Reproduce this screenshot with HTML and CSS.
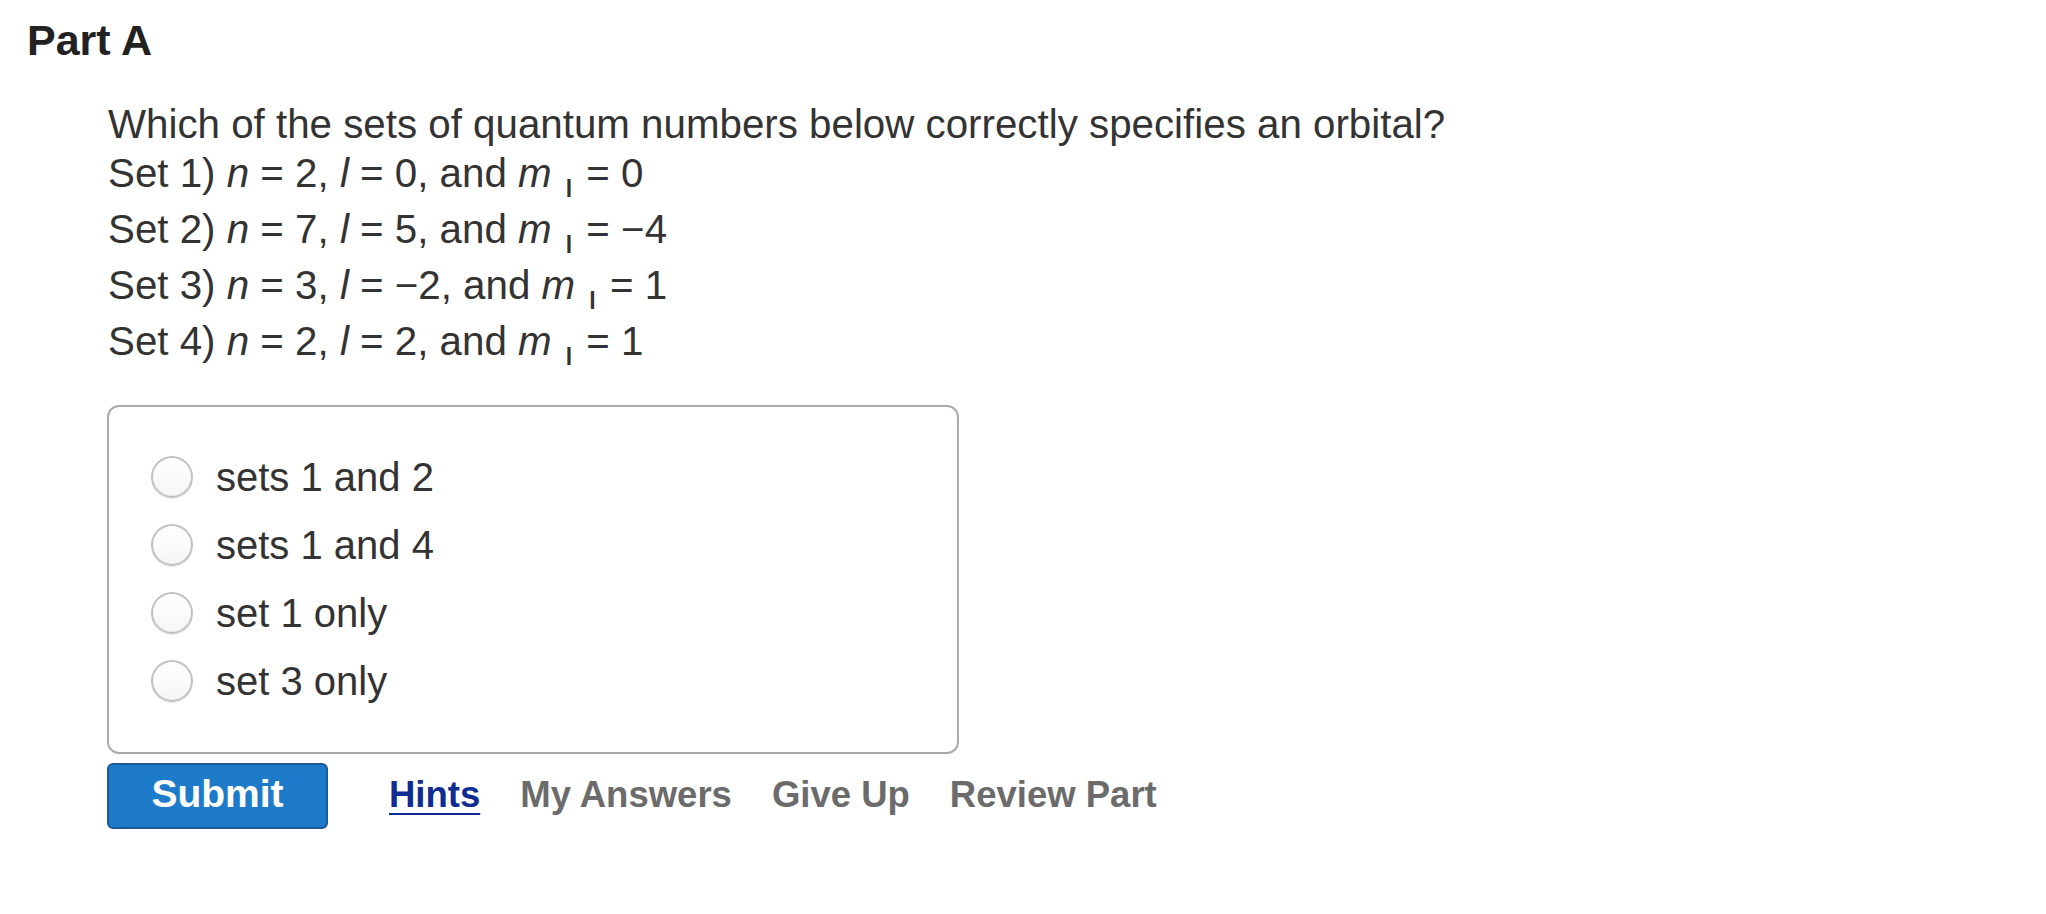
FILE: index.html
```html
<!DOCTYPE html>
<html lang="en">
<head>
<meta charset="utf-8">
<title>Part A</title>
<link rel="stylesheet" href="styles.css">
</head>
<body>
<div class="page">
  <h2 class="part-title">Part A</h2>
  <div class="part-body">
    <div class="question">
      <div class="q-line">Which of the sets of quantum numbers below correctly specifies an orbital?</div>
      <div class="set-line">Set 1) <i>n</i> = 2, <i>l</i> = 0, and <i>m</i> <span class="sub">l</span> = 0</div>
      <div class="set-line">Set 2) <i>n</i> = 7, <i>l</i> = 5, and <i>m</i> <span class="sub">l</span> = −4</div>
      <div class="set-line">Set 3) <i>n</i> = 3, <i>l</i> = −2, and <i>m</i> <span class="sub">l</span> = 1</div>
      <div class="set-line">Set 4) <i>n</i> = 2, <i>l</i> = 2, and <i>m</i> <span class="sub">l</span> = 1</div>
    </div>
    <div class="choices">
      <label class="choice"><span class="radio"></span><span class="choice-text">sets 1 and 2</span></label>
      <label class="choice"><span class="radio"></span><span class="choice-text">sets 1 and 4</span></label>
      <label class="choice"><span class="radio"></span><span class="choice-text">set 1 only</span></label>
      <label class="choice"><span class="radio"></span><span class="choice-text">set 3 only</span></label>
    </div>
    <div class="actions">
      <button class="submit" type="button">Submit</button>
      <a class="link link-hints" href="#">Hints</a>
      <a class="link" href="#">My Answers</a>
      <a class="link" href="#">Give Up</a>
      <a class="link" href="#">Review Part</a>
    </div>
  </div>
</div>
</body>
</html>
```

FILE: styles.css
```css
html, body {
  margin: 0;
  padding: 0;
  background: #ffffff;
}

body {
  font-family: "Liberation Sans", Arial, Helvetica, sans-serif;
  color: #333333;
}

.page {
  padding: 16px 0 0 27px;
}

.part-title {
  margin: 0;
  font-size: 43px;
  line-height: 48px;
  font-weight: bold;
  color: #222222;
}

.part-body {
  padding-left: 80px;
}

.question {
  margin-top: 36px;
  font-size: 40.3px;
  color: #333333;
}

.q-line {
  line-height: 49px;
  padding-left: 1px;
}

.set-line {
  line-height: 49px;
  padding-bottom: 7px;
  padding-left: 1px;
}

.question i {
  font-style: italic;
}

.sub {
  font-size: 23px;
  font-weight: bold;
  line-height: 0;
  vertical-align: -10px;
  font-style: normal;
  color: #333333;
  margin: 0 3px;
}

.choices {
  box-sizing: border-box;
  width: 852px;
  margin-top: 32px;
  border: 2px solid #ababab;
  border-radius: 12px;
  padding: 36px 0 37px 42px;
}

.choice {
  display: flex;
  align-items: center;
  height: 68px;
  font-size: 40px;
  color: #333333;
}

.radio {
  box-sizing: border-box;
  width: 42px;
  height: 42px;
  border-radius: 50%;
  border: 2px solid #c2c2c2;
  background: linear-gradient(#ffffff, #f6f6f6);
  box-shadow: inset 0 -1px 1px rgba(0, 0, 0, 0.06), 0 1px 1px rgba(0, 0, 0, 0.08);
  margin-right: 23px;
  flex: none;
}

.choice-text {
  line-height: 68px;
}

.actions {
  display: flex;
  align-items: baseline;
  margin-top: 9px;
}

.submit {
  box-sizing: border-box;
  height: 66px;
  width: 221px;
  padding: 0 0 4px 0;
  border: 2px solid #1a5b96;
  border-radius: 6px;
  background: #1e7bc9;
  color: #ffffff;
  font-family: "Liberation Sans", Arial, Helvetica, sans-serif;
  font-weight: bold;
  font-size: 39px;
  line-height: 58px;
  text-align: center;
}

.link {
  font-size: 36.5px;
  font-weight: bold;
  color: #6b6b6b;
  text-decoration: none;
  margin-left: 40px;
}

.link-hints {
  margin-left: 61px;
  color: #0f2c92;
  text-decoration: underline;
  text-decoration-thickness: 2px;
  text-underline-offset: 6px;
}
```
